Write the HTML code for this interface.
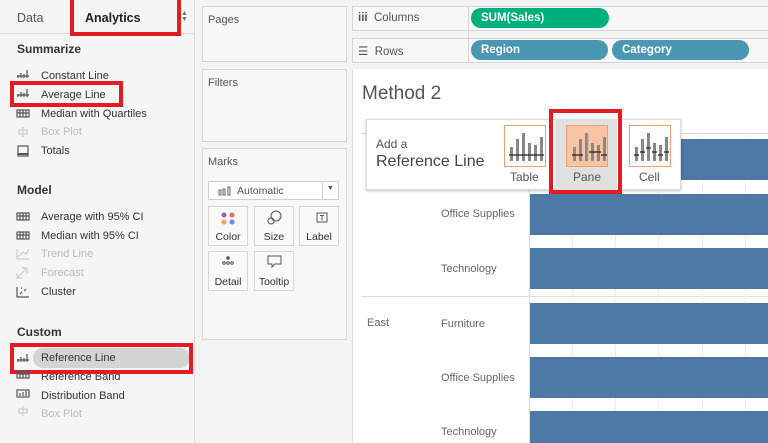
<!DOCTYPE html>
<html><head><style>
*{margin:0;padding:0;box-sizing:border-box}
html,body{width:768px;height:443px;overflow:hidden}
body{background:#f3f3f3;font-family:"Liberation Sans",sans-serif;position:relative;color:#333}
.a{position:absolute}
.t{position:absolute;font-size:11px;color:#333;white-space:nowrap}
.g{color:#bbb}
.h{position:absolute;font-size:12px;font-weight:bold;color:#333}
.red{position:absolute;border:4px solid #e31b23}
.box{position:absolute;background:#f7f7f7;border:1px solid #d6d6d6}
.pill{position:absolute;height:20px;border-radius:10px;color:#fff;font-size:11.5px;font-weight:bold;padding:0 10px;line-height:20px}
.bar{position:absolute;left:530px;width:238px;height:41px;background:#4e79a7}
.lbl{position:absolute;font-size:11px;color:#666}
.mk{position:absolute;width:40px;height:40px;background:#f9f9f9;border:1px solid #d6d6d6;font-size:10.5px;color:#333;text-align:center;padding-top:24px}
</style></head><body>
<div class="a" style="left:0;top:0;width:195px;height:443px;background:#f5f5f5;border-right:1px solid #ddd"></div>
<div class="a" style="left:0;top:33px;width:195px;height:1px;background:#ddd"></div>
<div class="t" style="left:17px;top:11px;font-size:12.5px;color:#555">Data</div>
<div class="t" style="left:85px;top:11px;font-size:12.5px;font-weight:bold;color:#222">Analytics</div>
<div class="t" style="left:181px;top:11px;font-size:7px;line-height:6px;color:#777">&#9650;<br>&#9660;</div>
<div class="red" style="left:70px;top:-4px;width:111px;height:40px"></div>
<div class="h" style="left:17px;top:42px">Summarize</div>
<div class="t" style="left:41px;top:70px">Constant Line</div>
<div class="t" style="left:41px;top:89px">Average Line</div>
<div class="t" style="left:41px;top:108px">Median with Quartiles</div>
<div class="t g" style="left:41px;top:126px">Box Plot</div>
<div class="t" style="left:41px;top:145px">Totals</div>
<div class="red" style="left:10px;top:81px;width:113px;height:26px"></div>
<div class="h" style="left:17px;top:183px">Model</div>
<div class="t" style="left:41px;top:211px">Average with 95% CI</div>
<div class="t" style="left:41px;top:230px">Median with 95% CI</div>
<div class="t g" style="left:41px;top:248px">Trend Line</div>
<div class="t g" style="left:41px;top:267px">Forecast</div>
<div class="t" style="left:41px;top:286px">Cluster</div>
<div class="h" style="left:17px;top:325px">Custom</div>
<div class="a" style="left:33px;top:348px;width:157px;height:20px;border-radius:10px;background:#d4d4d4"></div>
<div class="t" style="left:41px;top:352px">Reference Line</div>
<div class="t" style="left:41px;top:371px">Reference Band</div>
<div class="t" style="left:41px;top:390px">Distribution Band</div>
<div class="t g" style="left:41px;top:408px">Box Plot</div>
<div class="red" style="left:10px;top:343px;width:183px;height:31px"></div>
<svg class="a" style="left:16px;top:68px" width="14" height="360" stroke="#555" fill="none" stroke-width="1.2">
<path d="M2 10v-3M5 10v-5M8 10v-4M11 10v-8M1 8h12"/>
<path d="M2 29v-3M5 29v-5M8 29v-4M11 29v-8M1 27h12"/>
<rect x="1" y="42" width="12" height="7"/><path d="M1 45h12M4 42v7M7 42v7M10 42v7"/>
<path stroke="#ccc" d="M7 59v10M3 62h8v4H3z"/>
<rect x="2" y="78" width="10" height="10"/><path d="M2 86h10" stroke-width="2"/>
<rect x="1" y="145" width="12" height="7"/><path d="M1 148h12M4 145v7M7 145v7M10 145v7"/>
<rect x="1" y="164" width="12" height="7"/><path d="M1 167h12M4 164v7M7 164v7M10 164v7"/>
<path stroke="#ccc" d="M1 181v10h12M2 189l5-5 3 2 3-5"/>
<path stroke="#ccc" d="M2 209l8-8M6 200h5v5M1 205v5h5"/>
<path d="M1 219v10h12M4 226l2-2M8 223l2-2M5 220h1"/>
<path d="M2 294v-3M5 294v-5M8 294v-4M11 294v-8M1 292h12"/>
<rect x="1" y="303" width="12" height="7"/><path d="M1 306h12M4 303v7M7 303v7M10 303v7"/>
<rect x="1" y="322" width="12" height="7"/><path d="M4 328v-3M7 328v-4M10 328v-5"/>
<path stroke="#ccc" d="M7 338v10M3 341h8v4H3z"/>
</svg>
<div class="box" style="left:202px;top:6px;width:145px;height:56px"></div>
<div class="t" style="left:208px;top:14px;color:#555">Pages</div>
<div class="box" style="left:202px;top:69px;width:145px;height:73px"></div>
<div class="t" style="left:208px;top:77px;color:#555">Filters</div>
<div class="box" style="left:202px;top:148px;width:145px;height:192px"></div>
<div class="t" style="left:208px;top:156px;color:#555">Marks</div>
<div class="a" style="left:208px;top:181px;width:131px;height:19px;background:#fff;border:1px solid #d0d0d0"></div>
<div class="a" style="left:322px;top:181px;width:1px;height:19px;background:#d0d0d0"></div>
<div class="t" style="left:237px;top:185px;font-size:10.5px;color:#555">Automatic</div>
<div class="t" style="left:327px;top:185px;font-size:7px;color:#555">&#9660;</div>
<svg class="a" style="left:218px;top:186px" width="14" height="10" stroke="#666" fill="none"><rect x="1" y="4" width="2" height="5"/><rect x="5" y="3" width="2" height="6"/><rect x="10" y="1" width="2" height="8"/></svg>
<div class="mk" style="left:208px;top:206px">Color</div>
<div class="mk" style="left:254px;top:206px">Size</div>
<div class="mk" style="left:299px;top:206px">Label</div>
<div class="mk" style="left:208px;top:251px">Detail</div>
<div class="mk" style="left:254px;top:251px">Tooltip</div>
<svg class="a" style="left:208px;top:206px" width="135" height="90" fill="none" stroke="#555">
<circle cx="16" cy="9" r="2.5" fill="#8e6aa0" stroke="none"/><circle cx="24" cy="9" r="2.5" fill="#e96a6a" stroke="none"/>
<circle cx="16" cy="16" r="2.5" fill="#f0a060" stroke="none"/><circle cx="24" cy="16" r="2.5" fill="#6a8fd0" stroke="none"/>
<circle cx="68" cy="10" r="5"/><circle cx="63" cy="15" r="3"/>
<rect x="109" y="7" width="10" height="9"/><path d="M112 9.5h4M114 9.5v5"/>
<circle cx="20" cy="52" r="1.3" fill="#555"/><circle cx="16" cy="57" r="1.3"/><circle cx="20" cy="57" r="1.3"/><circle cx="24" cy="57" r="1.3"/>
<path d="M60 50h13v8h-6l-3 3v-3h-4z"/>
</svg>
<div class="box" style="left:352px;top:6px;width:420px;height:25px"></div>
<div class="box" style="left:352px;top:38px;width:420px;height:25px"></div>
<div class="a" style="left:468px;top:6px;width:1px;height:57px;background:#d6d6d6"></div>
<div class="t" style="left:358px;top:12px;font-size:11.5px;color:#555"><b>iii</b>&nbsp; Columns</div>
<div class="t" style="left:358px;top:44px;font-size:11.5px;color:#555">&#9776;&nbsp; Rows</div>
<div class="pill" style="left:471px;top:8px;width:138px;background:#00b07a">SUM(Sales)</div>
<div class="pill" style="left:471px;top:40px;width:137px;background:#4a97b3">Region</div>
<div class="pill" style="left:612px;top:40px;width:137px;background:#4a97b3">Category</div>
<div class="a" style="left:352px;top:69px;width:416px;height:374px;background:#fff;border-left:1px solid #ddd"></div>
<div class="t" style="left:362px;top:83px;font-size:19px;color:#555">Method 2</div>
<div class="a" style="left:361px;top:133px;width:407px;height:1px;background:#ddd"></div>
<div class="a" style="left:361px;top:296px;width:407px;height:1px;background:#ddd"></div>
<div class="a" style="left:529px;top:133px;width:1px;height:310px;background:#ddd"></div>
<div class="a" style="left:572px;top:133px;width:1px;height:310px;background:#eee"></div>
<div class="a" style="left:615px;top:133px;width:1px;height:310px;background:#eee"></div>
<div class="a" style="left:658px;top:133px;width:1px;height:310px;background:#eee"></div>
<div class="a" style="left:702px;top:133px;width:1px;height:310px;background:#eee"></div>
<div class="a" style="left:745px;top:133px;width:1px;height:310px;background:#eee"></div>
<div class="bar" style="top:139px"></div>
<div class="bar" style="top:194px"></div>
<div class="bar" style="top:248px"></div>
<div class="bar" style="top:303px"></div>
<div class="bar" style="top:357px"></div>
<div class="bar" style="top:411px"></div>
<div class="lbl" style="left:441px;top:208px">Office Supplies</div>
<div class="lbl" style="left:441px;top:263px">Technology</div>
<div class="lbl" style="left:367px;top:317px">East</div>
<div class="lbl" style="left:441px;top:318px">Furniture</div>
<div class="lbl" style="left:441px;top:372px">Office Supplies</div>
<div class="lbl" style="left:441px;top:426px">Technology</div>
<div class="a" style="left:366px;top:119px;width:315px;height:71px;background:#fff;border:1px solid #ddd;box-shadow:0 1px 3px rgba(0,0,0,.25)"></div>
<div class="a" style="left:555px;top:119px;width:62px;height:71px;background:#e0e0e0"></div>
<div class="t" style="left:376px;top:137px;font-size:12px;color:#555">Add a</div>
<div class="t" style="left:376px;top:153px;font-size:16px;color:#444">Reference Line</div>
<div class="a" style="left:504px;top:125px;width:42px;height:42px;border:1px solid #f0a070;background:#fff"></div>
<div class="a" style="left:566px;top:125px;width:42px;height:42px;border:1px solid #f0a070;background:#f8c4a4"></div>
<div class="a" style="left:629px;top:125px;width:42px;height:42px;border:1px solid #f0a070;background:#fff"></div>
<svg class="a" style="left:504px;top:125px" width="170" height="42">
<g fill="#888"><rect x="6" y="22" width="3" height="14"/><rect x="12" y="14" width="3" height="22"/><rect x="18" y="8" width="3" height="28"/><rect x="24" y="18" width="3" height="18"/><rect x="30" y="20" width="3" height="16"/><rect x="36" y="12" width="3" height="24"/></g>
<path d="M5 30h35" stroke="#222" stroke-width="1.2"/>
<g fill="#888" transform="translate(63,0)"><rect x="6" y="22" width="3" height="14"/><rect x="12" y="14" width="3" height="22"/><rect x="18" y="8" width="3" height="28"/><rect x="24" y="18" width="3" height="18"/><rect x="30" y="20" width="3" height="16"/><rect x="36" y="12" width="3" height="24"/></g>
<path d="M84 8v28" stroke="#aaa"/>
<path d="M68 30h11M85 27h12M97 30h6" stroke="#222" stroke-width="1.2"/>
<g fill="#888" transform="translate(125,0)"><rect x="6" y="22" width="3" height="14"/><rect x="12" y="14" width="3" height="22"/><rect x="18" y="8" width="3" height="28"/><rect x="24" y="18" width="3" height="18"/><rect x="30" y="20" width="3" height="16"/><rect x="36" y="12" width="3" height="24"/></g>
<path d="M130 30h5M136 27h5M142 23h5M148 27h5M154 30h5M160 27h5" stroke="#222" stroke-width="1.2"/>
</svg>
<div class="t" style="left:510px;top:170px;font-size:12px;color:#555">Table</div>
<div class="t" style="left:573px;top:170px;font-size:12px;color:#555">Pane</div>
<div class="t" style="left:639px;top:170px;font-size:12px;color:#555">Cell</div>
<div class="red" style="left:549px;top:109px;width:73px;height:85px"></div>
</body></html>
